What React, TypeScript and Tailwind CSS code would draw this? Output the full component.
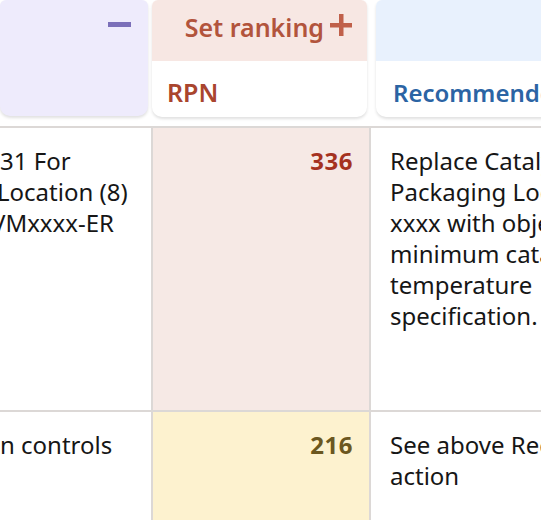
export default function App() {
  const font = { fontFamily: '"Noto Sans", "Open Sans", sans-serif' };

  return (
    <div style={font} className="w-[541px] h-[520px] overflow-hidden bg-white text-[#161616]">
      {/* Header cards */}
      <div className="grid grid-cols-[151px_220px_1fr] h-[126px] bg-white">
        <div className="pr-[3px]">
          <div className="h-[116px] rounded-b-[10px] rounded-t-[6px] bg-[#eeebfc] shadow-[0_2px_3px_rgba(0,0,0,0.12)] flex justify-end pt-[22px] pr-[17px]">
            <div className="w-[23px] h-[5px] bg-[#7b6fb9]" />
          </div>
        </div>
        <div className="pl-[1px] pr-[4px]">
          <div className="h-[117px] rounded-b-[10px] rounded-t-[6px] bg-white shadow-[0_2px_3px_rgba(0,0,0,0.12)] flex flex-col overflow-hidden">
            <div className="h-[61px] bg-[#f7e7e3] flex items-start justify-end pr-[14px] pt-[12px] gap-[5px]">
              <span className="text-[25px] leading-[31px] font-semibold text-[#b2543c]">Set ranking</span>
              <svg width="24" height="24" viewBox="0 0 24 24" className="mt-[1px]">
                <rect x="10" y="1" width="4.5" height="22" fill="#c0604a" />
                <rect x="1" y="10" width="22" height="4.5" fill="#c0604a" />
              </svg>
            </div>
            <div className="flex-1 pl-[15px] pt-[16px]">
              <span className="text-[25px] leading-[31px] font-semibold text-[#a9452e]">RPN</span>
            </div>
          </div>
        </div>
        <div className="pl-[5px]">
          <div className="h-[117px] w-[220px] rounded-b-[10px] rounded-t-[6px] bg-white shadow-[0_2px_3px_rgba(0,0,0,0.12)] flex flex-col overflow-hidden">
            <div className="h-[61px] bg-[#e8f1fd]" />
            <div className="flex-1 pl-[17px] pt-[16px] whitespace-nowrap">
              <span className="text-[24px] leading-[31px] font-semibold text-[#2b64a4]">Recommended action</span>
            </div>
          </div>
        </div>
      </div>

      {/* Table body */}
      <div className="border-t-2 border-[#dcd8d6]">
        <div className="grid grid-cols-[151px_220px_1fr] h-[284px] border-b-2 border-[#dcd8d6] text-[24px] leading-[31px]">
          <div className="pt-[17px] whitespace-nowrap overflow-hidden">
            <div className="ml-[0px]">31 For</div>
            <div className="ml-[-3px]">Location (8)</div>
            <div className="ml-[-9px]">VMxxxx-ER</div>
          </div>
          <div className="bg-[#f6e9e5] border-x-2 border-[#dcd8d6] pt-[17px] pr-[16px] text-right font-bold tracking-[0.5px] text-[#a5321f]">
            336
          </div>
          <div className="pt-[17px] pl-[19px] whitespace-nowrap">
            <div>Replace Catalyst in</div>
            <div>Packaging Location</div>
            <div>xxxx with objective</div>
            <div>minimum catalyst</div>
            <div>temperature</div>
            <div>specification.</div>
          </div>
        </div>
        <div className="grid grid-cols-[151px_220px_1fr] h-[120px] text-[24px] leading-[31px]">
          <div className="pt-[17px] whitespace-nowrap overflow-hidden">
            <div>n controls</div>
          </div>
          <div className="bg-[#fdf2cf] border-x-2 border-[#dcd8d6] pt-[17px] pr-[16px] text-right font-bold tracking-[0.5px] text-[#6b5720]">
            216
          </div>
          <div className="pt-[17px] pl-[19px] whitespace-nowrap">
            <div>See above Recommended</div>
            <div>action</div>
          </div>
        </div>
      </div>
    </div>
  );
}
